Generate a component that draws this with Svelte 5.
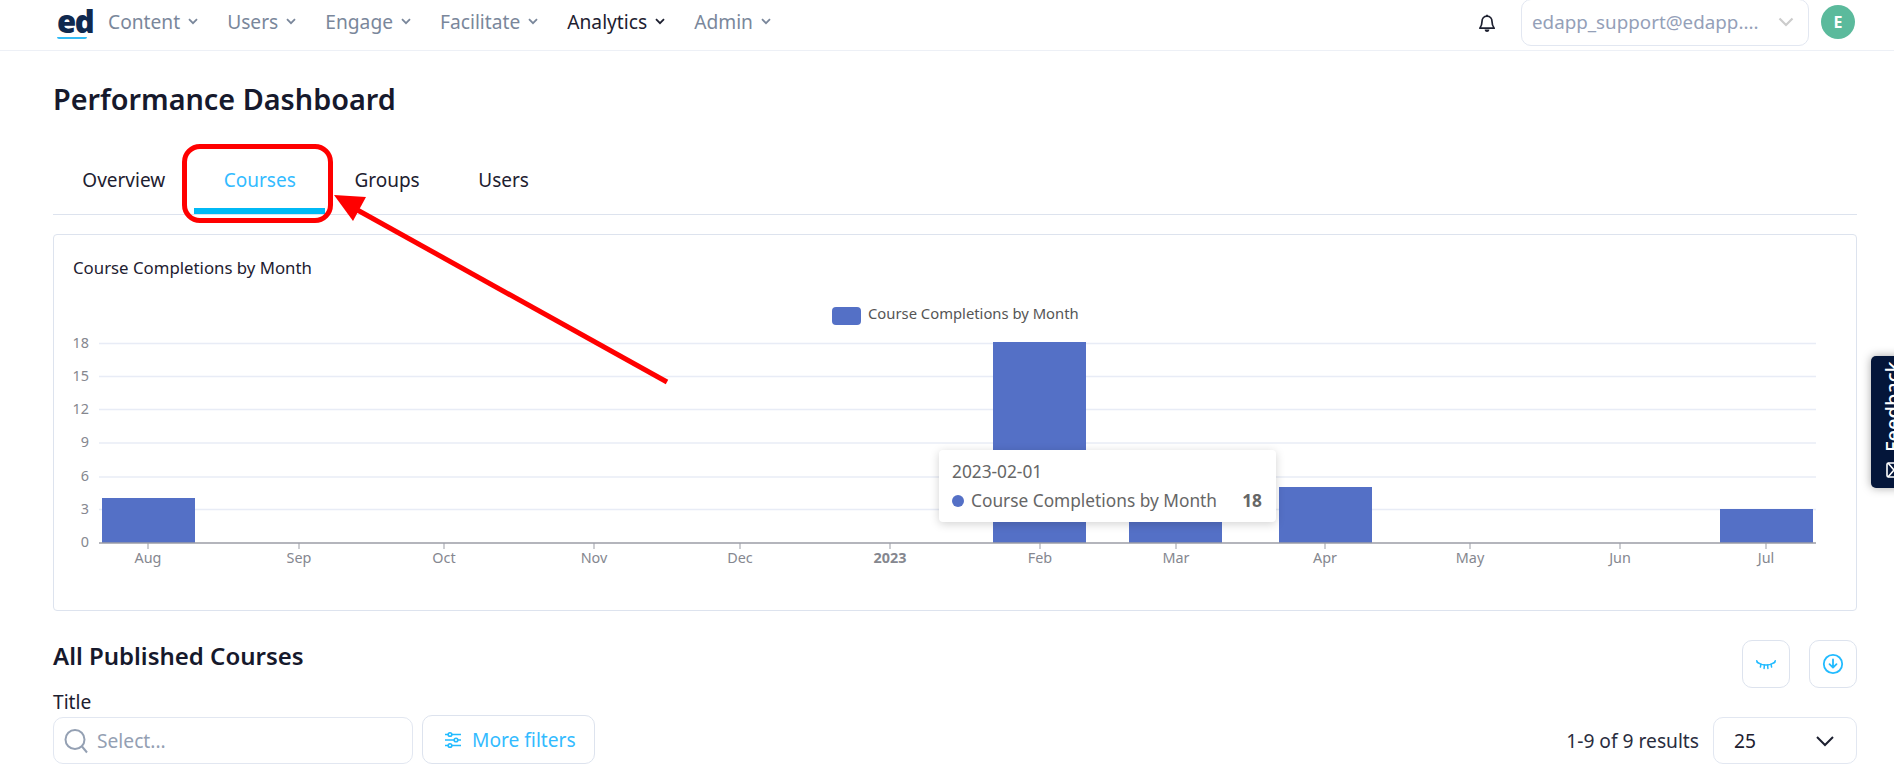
<script>
  const nav = [
    { label: 'Content' }, { label: 'Users' }, { label: 'Engage' },
    { label: 'Facilitate' }, { label: 'Analytics', active: true }, { label: 'Admin' }
  ];
  const tabs = [{ label: 'Overview' }, { label: 'Courses', active: true }, { label: 'Groups' }, { label: 'Users' }];
  const axisY = 543;
  const rows = [[18, 343.5], [15, 376.5], [12, 409.5], [9, 443], [6, 477], [3, 509.5], [0, 543]];
  const months = [
    { l: 'Aug', x: 148 }, { l: 'Sep', x: 299 }, { l: 'Oct', x: 444 }, { l: 'Nov', x: 594 },
    { l: 'Dec', x: 740 }, { l: '2023', x: 890, b: true }, { l: 'Feb', x: 1040 }, { l: 'Mar', x: 1176 },
    { l: 'Apr', x: 1325 }, { l: 'May', x: 1470 }, { l: 'Jun', x: 1620 }, { l: 'Jul', x: 1766 }
  ];
  const bars = [
    { x: 102, w: 93, top: 498 }, { x: 993, w: 93, top: 342 }, { x: 1129, w: 93, top: 476 },
    { x: 1279, w: 93, top: 487 }, { x: 1720, w: 93, top: 509 }
  ];
</script>

<div class="page">
  <header class="topbar">
    <div class="logo"><span class="logo-text">ed</span><span class="swoosh"></span></div>
    <nav class="nav">
      {#each nav as item}
        <span class="nav-item" class:active={item.active}>
          {item.label}
          <svg width="10" height="7" viewBox="0 0 10 7"><path d="M1 1.2 5 5.2 9 1.2" fill="none" stroke="currentColor" stroke-width="1.8"/></svg>
        </span>
      {/each}
    </nav>
    <div class="top-right">
      <svg class="bell" width="18" height="20" viewBox="0 0 18 20"><path d="M9 2.2c-3.2 0-5 2.5-5 5.4 0 3.3-.8 5-2.2 6.6h14.4C14.800 12.600 14 10.900 14 7.600c0-2.900-1.800-5.400-5-5.400Z" fill="none" stroke="#1d2030" stroke-width="1.700" stroke-linejoin="round"/><path d="M9 .8v1.500" stroke="#1d2030" stroke-width="1.700"/><path d="M6.600 15.600c.3 1.800 1.200 2.500 2.400 2.500s2.100-.7 2.400-2.500Z" fill="#1d2030"/></svg>
      <div class="account">
        <span>edapp_support@edapp....</span>
        <svg width="16" height="10" viewBox="0 0 16 10"><path d="M1.500 1.500 8 8l6.500-6.500" fill="none" stroke="#cccccc" stroke-width="2.200"/></svg>
      </div>
      <div class="avatar">E</div>
    </div>
  </header>

  <main class="main">
    <h1>Performance Dashboard</h1>

    <div class="tabs">
      {#each tabs as tab}
        <div class="tab" class:active={tab.active}>{tab.label}</div>
      {/each}
    </div>

    <section class="card">
      <h2>Course Completions by Month</h2>
      <svg class="chart" width="1802" height="300" viewBox="54 290 1802 300">
        <rect x="832" y="307" width="29" height="18" rx="4" fill="#5470c6"/>
        <text x="868" y="319" class="legend">Course Completions by Month</text>
        {#each rows as r}
          {#if r[0] !== 0}
            <line x1="99" x2="1816" y1={r[1]} y2={r[1]} stroke="#e8ecf6" stroke-width="1.300"/>
          {/if}
          <text x="89" y={r[1] + 4} text-anchor="end" class="axis">{r[0]}</text>
        {/each}
        {#each bars as b}
          <rect x={b.x} y={b.top} width={b.w} height={axisY - b.top} fill="#5470c6"/>
        {/each}
        <line x1="99" x2="1816" y1={axisY} y2={axisY} stroke="#9b9da6" stroke-width="1.500"/>
        {#each months as m}
          <line x1={m.x} x2={m.x} y1={axisY} y2={axisY + 6} stroke="#9b9da6" stroke-width="1"/>
          <text x={m.x} y="563" text-anchor="middle" class="axis" class:bold={m.b}>{m.l}</text>
        {/each}
      </svg>
      <div class="tooltip">
        <div class="tip-date">2023-02-01</div>
        <div class="tip-row">
          <span class="dot"></span>
          <span class="tip-name">Course Completions by Month</span>
          <b>18</b>
        </div>
      </div>
    </section>

    <div class="list-head">
      <h3>All Published Courses</h3>
      <div class="icon-btns">
        <button class="icon-btn" aria-label="Hide columns">
          <svg class="eye" width="20" height="11" viewBox="0 0 20 11" fill="none" stroke="#22bbff" stroke-width="1.500" stroke-linecap="round"><path d="M1 2c2.800 2.200 5.500 3 9 3s6.200-.8 9-3"/><path d="M.8 .8 1.600 2.600M5 4.200 4.400 7M8.400 5 8.100 8.500M11.600 5l.3 3.500M15 4.200l.6 2.800M19.200 .8l-.8 1.800"/></svg>
        </button>
        <button class="icon-btn" aria-label="Download">
          <svg width="22" height="22" viewBox="0 0 22 22" fill="none" stroke="#22bbff" stroke-width="1.800" stroke-linecap="round" stroke-linejoin="round"><circle cx="11" cy="11" r="9.200"/><path d="M11 6.500v8M7.500 11.200 11 14.700l3.500-3.500"/></svg>
        </button>
      </div>
    </div>

    <div class="filters">
      <div class="filter-left">
        <div class="field">
          <label for="title">Title</label>
          <div class="search" id="title">
            <svg width="24" height="26" viewBox="0 0 24 26" fill="none" stroke="#94a0b3" stroke-width="2"><circle cx="11" cy="11.500" r="9.500"/><path d="m18 18.500 5 6"/></svg>
            <span>Select...</span>
          </div>
        </div>
        <button class="more">
          <svg width="18" height="18" viewBox="0 0 18 18" fill="none" stroke="#22bbff" stroke-width="1.600"><path d="M1 3.500h16M1 9h16M1 14.500h16"/><circle cx="6" cy="3.500" r="1.800" fill="#fff"/><circle cx="12" cy="9" r="1.800" fill="#fff"/><circle cx="6" cy="14.500" r="1.800" fill="#fff"/></svg>
          More filters
        </button>
      </div>
      <div class="filter-right">
        <span class="results">1-9 of 9 results</span>
        <div class="page-size">
          <span>25</span>
          <svg width="20" height="12" viewBox="0 0 20 12"><path d="M2 2l8 8 8-8" fill="none" stroke="#1d2030" stroke-width="2"/></svg>
        </div>
      </div>
    </div>
  </main>

  <div class="feedback">
    <div class="feedback-inner">
      <svg width="16" height="16" viewBox="0 0 16 16" fill="none" stroke="#fff" stroke-width="1.600"><rect x="1" y="2" width="14" height="12" rx="1.500"/><path d="m1 3 7 6 7-6"/></svg>
      <span>Feedback</span>
    </div>
  </div>

  <div class="highlight"></div>
  <svg class="arrow" width="1894" height="778" viewBox="0 0 1894 778">
    <line x1="667" y1="382" x2="352" y2="207" stroke="#ff0000" stroke-width="5"/>
    <polygon points="334,195 366,197 353,221" fill="#ff0000"/>
  </svg>
</div>

<style>
  :global(body) {
    margin: 0;
    background: #fff;
    font-family: "Noto Sans", "Open Sans", sans-serif;
  }
  .page {
    position: relative;
    width: 1894px;
    height: 778px;
    overflow: hidden;
    color: #16192c;
  }
  .topbar {
    display: flex;
    align-items: center;
    height: 50px;
    padding-left: 57px;
    border-bottom: 1px solid #edf0f6;
    box-sizing: content-box;
  }
  .logo {
    display: flex;
    flex-direction: column;
    width: 30px;
    margin-right: 21px;
    margin-top: -6px;
  }
  .logo-text {
    font-family: "Open Sans", sans-serif;
    font-weight: 800;
    font-size: 31px;
    line-height: 30px;
    letter-spacing: -1.500px;
    color: #10294f;
  }
  .swoosh {
    height: 2px;
    margin-top: 1px;
    border-radius: 0 0 4px 4px;
    background: #33bbf5;
  }
  .nav { display: flex; gap: 29px; margin-top: -7px; }
  .nav-item {
    display: flex;
    align-items: center;
    gap: 8px;
    font-size: 19.200px;
    line-height: 24px;
    color: #7a879b;
  }
  .nav-item.active { color: #1d2030; }
  .top-right {
    margin-left: auto;
    display: flex;
    align-items: center;
    padding-right: 39px;
  }
  .bell { margin-right: 25px; margin-top: -2px; }
  .account {
    display: flex;
    align-items: center;
    justify-content: space-between;
    box-sizing: border-box;
    width: 288px;
    height: 47px;
    margin-top: -6px;
    margin-right: 12px;
    padding: 0 14px 0 10px;
    border: 1px solid #e2e7f1;
    border-radius: 10px;
    font-size: 18.800px;
    color: #94a0b8;
  }
  .avatar {
    display: flex;
    align-items: center;
    justify-content: center;
    width: 34px;
    height: 34px;
    margin-top: -6px;
    border-radius: 50%;
    background: #5bba9c;
    color: #fff;
    font-weight: 700;
    font-size: 16px;
  }
  .main { padding: 0 37px 0 53px; }
  h1 {
    margin: 29px 0 0;
    font-size: 28.800px;
    line-height: 38px;
    font-weight: 600;
  }
  .tabs {
    display: flex;
    height: 67px;
    margin-top: 29px;
    border-bottom: 1px solid #dde3ee;
    box-sizing: content-box;
  }
  .tab {
    position: relative;
    padding: 0 29.300px;
    font-size: 19px;
    line-height: 50px;
    margin-top: 8px;
    color: #1d2030;
    height: 59px;
  }
  .tab.active { color: #33bbff; }
  .tab.active::after {
    content: "";
    position: absolute;
    left: 0;
    right: 0;
    bottom: 0;
    height: 6px;
    background: #00b9f5;
  }
  .card {
    position: relative;
    box-sizing: border-box;
    height: 377px;
    margin-top: 19px;
    border: 1px solid #dde3ee;
    border-radius: 4px;
  }
  h2 {
    margin: 0;
    padding: 21px 0 0 19px;
    font-size: 16.800px;
    line-height: 24px;
    font-weight: 400;
    color: #1d2030;
  }
  .chart { display: block; margin-top: 10px; }
  .legend { font-size: 14.800px; fill: #555; }
  .axis { font-size: 14.400px; fill: #85878f; }
  .axis.bold { font-weight: 700; }
  .tooltip {
    position: absolute;
    left: 885px;
    top: 215px;
    box-sizing: border-box;
    width: 337px;
    height: 72px;
    padding: 9px 13px;
    background: #fff;
    border-radius: 4px;
    box-shadow: 0 2px 10px rgba(0, 0, 0, 0.18);
    color: #666;
    font-size: 17.300px;
    line-height: 26px;
  }
  .tip-row { display: flex; align-items: center; margin-top: 3px; }
  .dot {
    width: 12px;
    height: 12px;
    margin-right: 7px;
    border-radius: 50%;
    background: #5470c6;
  }
  .tip-row b { margin-left: auto; font-weight: 700; margin-right: 1px; }
  .list-head {
    display: flex;
    justify-content: space-between;
    align-items: flex-start;
    margin-top: 29px;
  }
  h3 {
    margin: 0;
    font-size: 24px;
    line-height: 32px;
    font-weight: 600;
  }
  .icon-btns { display: flex; gap: 19px; }
  .icon-btn {
    display: flex;
    align-items: center;
    justify-content: center;
    width: 48px;
    height: 48px;
    padding: 0;
    background: #fff;
    border: 1px solid #dde3ee;
    border-radius: 10px;
  }
  .eye { margin-top: 3px; }
  .filters {
    display: flex;
    justify-content: space-between;
    align-items: flex-end;
    margin-top: 2px;
  }
  .filter-left { display: flex; align-items: flex-end; gap: 9px; }
  label {
    display: block;
    font-size: 19.200px;
    line-height: 24px;
    margin-bottom: 3px;
    color: #1d2030;
  }
  .search {
    display: flex;
    align-items: center;
    gap: 9px;
    box-sizing: border-box;
    width: 360px;
    height: 47px;
    padding-left: 10px;
    border: 1px solid #e2e7f1;
    border-radius: 10px;
    font-size: 19.200px;
    color: #94a0b3;
  }
  .more {
    display: flex;
    align-items: center;
    gap: 10px;
    box-sizing: border-box;
    width: 173px;
    height: 49px;
    padding: 0 0 0 21px;
    background: #fff;
    border: 1px solid #dde3ee;
    border-radius: 10px;
    font-family: inherit;
    font-size: 19.200px;
    color: #33bbff;
  }
  .filter-right { display: flex; align-items: center; gap: 14px; }
  .results { font-size: 19.200px; color: #2a2d3e; }
  .page-size {
    display: flex;
    align-items: center;
    justify-content: space-between;
    box-sizing: border-box;
    width: 144px;
    height: 47px;
    padding: 0 21px 0 20px;
    border: 1px solid #e2e7f1;
    border-radius: 10px;
    font-size: 19.200px;
    color: #1d2030;
  }
  .feedback {
    position: absolute;
    left: 1871px;
    top: 356px;
    width: 40px;
    height: 132px;
    border-radius: 5px;
    background: #04163a;
    box-shadow: 0 0 10px rgba(0, 0, 0, 0.35);
    overflow: hidden;
  }
  .feedback-inner {
    position: absolute;
    left: 13px;
    bottom: 10px;
    display: flex;
    align-items: center;
    gap: 10px;
    transform-origin: 0 100%;
    transform: rotate(-90deg) translateY(100%);
    color: #fff;
    font-size: 20px;
    font-weight: 500;
    white-space: nowrap;
    line-height: 18px;
  }
  .highlight {
    position: absolute;
    left: 182px;
    top: 144px;
    width: 151px;
    height: 79px;
    box-sizing: border-box;
    border: 5px solid #ff0000;
    border-radius: 18px;
  }
  .arrow { position: absolute; left: 0; top: 0; pointer-events: none; }
</style>
